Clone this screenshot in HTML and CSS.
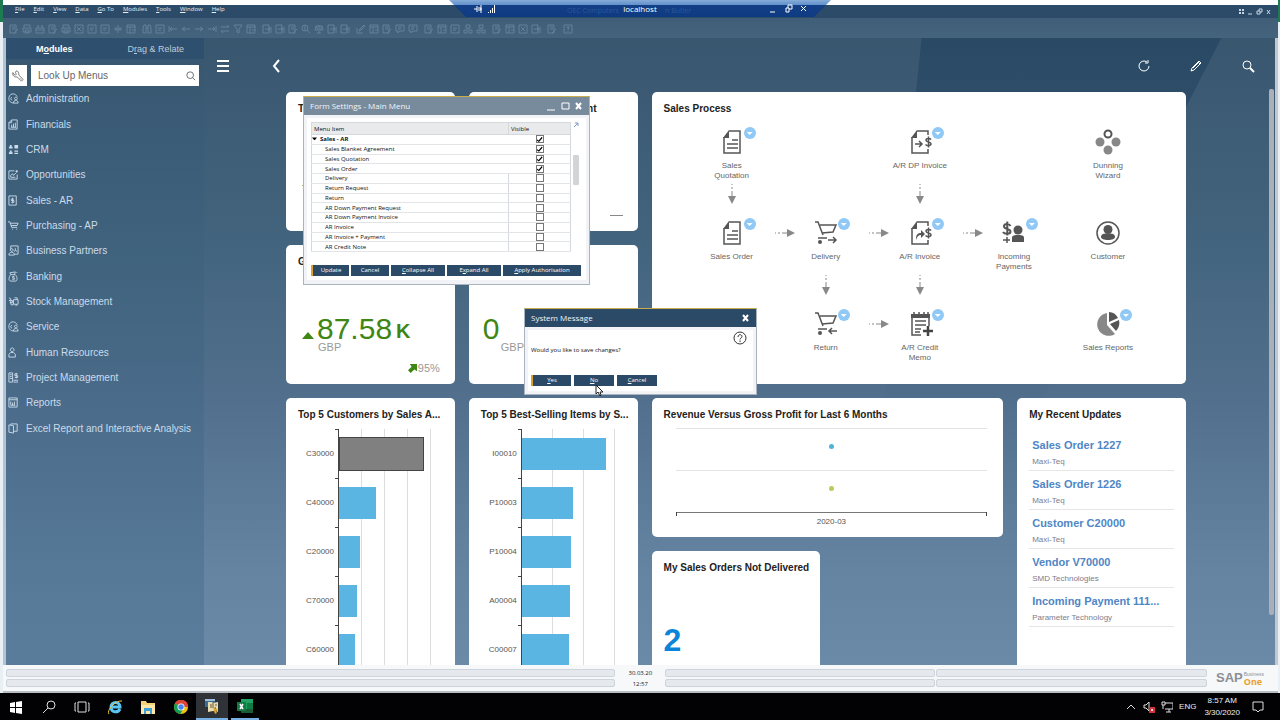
FILE: index.html
```html
<!DOCTYPE html>
<html lang="en">
<head>
  <meta charset="UTF-8">
  <title>localhost - SAP Business One</title>
  <meta name="viewport" content="width=device-width, initial-scale=1">
  <link rel="stylesheet" href="styles.css">
</head>

<body>

  <!-- Icon sprite -->
  <svg class="sprite" aria-hidden="true">
    <symbol id="t-page" viewBox="0 0 10 10"><path d="M1 1h6v8H1zM3 3h3M3 5h3M5 9l4-4"/></symbol>
    <symbol id="t-print" viewBox="0 0 10 10"><path d="M2 4V1h6v3M1 4h8v4H1zM3 6h4v3H3z"/></symbol>
    <symbol id="t-mail" viewBox="0 0 10 10"><path d="M1 4h8v5H1zM1 6h8M3 4V1M7 4V1M3 2h1M7 2h1"/></symbol>
    <symbol id="t-box" viewBox="0 0 10 10"><path d="M1 1h8v8H1zM3 3l4 4M7 3L3 7"/></symbol>
    <symbol id="t-note" viewBox="0 0 10 10"><path d="M1 1h8v8H1zM3 4h4M3 6h3"/></symbol>
    <symbol id="t-move" viewBox="0 0 10 10"><path d="M5 1v8M1 5h8M3 3v4M7 3v4"/></symbol>
    <symbol id="t-grid" viewBox="0 0 10 10"><path d="M1 1h8v8H1zM1 3h8M4 3v6M6 6h3"/></symbol>
    <symbol id="t-find" viewBox="0 0 10 10"><path d="M1 9V4l1-3h2v8zM6 9V1h2l1 3v5zM4 4h2"/></symbol>
    <symbol id="t-first" viewBox="0 0 10 10"><path d="M1 2v6M9 5H2M4 3L2 5l2 2"/></symbol>
    <symbol id="t-prev" viewBox="0 0 10 10"><path d="M9 5H1M4 3L1 5l3 2"/></symbol>
    <symbol id="t-next" viewBox="0 0 10 10"><path d="M1 5h8M6 3l3 2-3 2"/></symbol>
    <symbol id="t-last" viewBox="0 0 10 10"><path d="M9 2v6M1 5h7M6 3l2 2-2 2"/></symbol>
    <symbol id="t-swap" viewBox="0 0 10 10"><path d="M1 3h8L7 1M9 7H1l2 2"/></symbol>
    <symbol id="t-filter" viewBox="0 0 10 10"><path d="M1 1h8L6 5v4L4 8V5z"/></symbol>
    <symbol id="t-doc" viewBox="0 0 10 10"><path d="M1 1h6v8H1zM9 3v6M3 5h5M6 3l2 2-2 2"/></symbol>
    <symbol id="t-scale" viewBox="0 0 10 10"><path d="M5 1v8M2 2h6M1 6l1-4 2 4zM6 6l2-4 1 4zM3 9h4"/></symbol>
    <symbol id="t-zoom" viewBox="0 0 10 10"><circle cx="4" cy="4" r="3"/><path d="M6 6l3 3M4 2v4"/></symbol>
    <symbol id="t-pen" viewBox="0 0 10 10"><path d="M1 4v5h6M3 7l1-2 4-4 1 1-4 4z"/></symbol>
    <symbol id="t-msg" viewBox="0 0 10 10"><path d="M1 1h8v6H5L3 9V7H1zM3 3h4M3 5h3"/></symbol>
    <symbol id="t-org" viewBox="0 0 10 10"><path d="M3 1h4v3H3zM5 4v2M1 6h3v3H1zM6 6h3v3H6z"/></symbol>
    <symbol id="t-help" viewBox="0 0 10 10"><path d="M1 1h8v8H1zM4 4V3h2v1L5 5v1M5 7v1"/></symbol>

    <symbol id="m-admin" viewBox="0 0 12 12"><path d="M6 11c-4-.500-5.500-3-5-6s3-4.500 5-4 3 1 4 3M4 4.500L3 6l1 2M8.500 4.500a1.500 1.500 0 1 0 .1 0zM6 11c0-2 1-3 2.500-3s2.500 1 2.500 3z"/></symbol>
    <symbol id="m-fin" viewBox="0 0 12 12"><path d="M4 1h6v10H1V4zM4 1v3H1M4 9V6M6 9V5M8 9V4M3 9h6"/></symbol>
    <symbol id="m-crm" viewBox="0 0 12 12"><path class="solid" d="M2 1h2v2h1v2H1V3h1zM7 1h4v4H7zM2 7h2v2h1v2H1V9h1zM7 7h4v1.500H7zM7 9.500h4V11H7z"/></symbol>
    <symbol id="m-opp" viewBox="0 0 12 12"><path d="M7 2H1v9h9V6M3 9V7l2-2 1 2 3-3M9.500 1v3M8 2.500h3M3 9h5"/></symbol>
    <symbol id="m-sales" viewBox="0 0 12 12"><path d="M1 1h8v10H1zM6.500 4.500h-3v1.500h3v2h-3M5 3v6"/></symbol>
    <symbol id="m-cart" viewBox="0 0 12 12"><path d="M0 2h2l2 6h6M2.500 3.500H11L10 6H3.500M4.500 10h1M9 10h1"/></symbol>
    <symbol id="m-bp" viewBox="0 0 12 12"><path d="M3 5V1h8v9H7M4 4a1.500 1.500 0 1 0 .1 0zM1 11c0-2 1-3 3-3s3 1 3 3zM8 3.500v2M6.500 7l1.500-1 2 1"/></symbol>
    <symbol id="m-bank" viewBox="0 0 12 12"><path d="M3 4h5c2 2 3 7 0 7H3C0 11 1 6 3 4zM3 4L2 2l6-1-1 3M7 6H5v1.500h2V9H4.500M9 1l1 1"/></symbol>
    <symbol id="m-stock" viewBox="0 0 12 12"><path d="M1 2l2 1v6M3 9h3M6 4h5v5H6zM7 2h3v2M1 5h4v2H2M4 10h1M8 10h2"/></symbol>
    <symbol id="m-hr" viewBox="0 0 12 12"><path d="M4.500 1a2 2 0 1 0 .1 0zM1 11V8l2-2h3l2 2v3z"/></symbol>
    <symbol id="m-proj" viewBox="0 0 12 12"><path d="M1 1h4v10H1zM2 3h2M2 5h2M2 7h3M10.500 2H7.500v2h3v2h-3M9 1v6M6 9h5M6 11h5"/></symbol>
    <symbol id="m-rep" viewBox="0 0 12 12"><path d="M1 1h9v10H1zM1 3h9M3 5v4M5 6v3M7 5v4M3 9h5"/></symbol>
    <symbol id="m-xl" viewBox="0 0 12 12"><path d="M1 2l5 1v8L1 10zM3 2V1h7v8H6"/></symbol>

    <symbol id="p-doc" viewBox="0 0 26 26"><path class="line" d="M10 2h11v22H5V8"/><path class="solid" d="M10 1v8H4z"/><path class="line" d="M13 11h6M8 15h11M8 19h11"/></symbol>
    <symbol id="p-dp" viewBox="0 0 26 26"><path class="line" d="M10 2h11v4M21 20v4H5V8"/><path class="solid" d="M10 1v8H4z"/><path class="line" d="M8 15h6M12 12l3 3-3 3M24 10.500c-1-1.500-5-1.500-5 .8 0 2.300 5 1.200 5 3.500s-4 2.400-5.500.7M21.500 7.500v11"/></symbol>
    <symbol id="p-inv" viewBox="0 0 26 26"><path class="line" d="M10 2h11v4M21 20v4H5V8"/><path class="solid" d="M10 1v8H4zM9 20c0-5 1-7 5-7v-3l4 4-4 4v-3c-3 0-4 2-5 5z"/><path class="line" d="M24 10.500c-1-1.500-5-1.500-5 .8 0 2.300 5 1.200 5 3.500s-4 2.400-5.500.7M21.500 7.500v11"/></symbol>
    <symbol id="p-deliver" viewBox="0 0 26 26"><path class="line" d="M2 2h3l5 13M7 5h16l-3 7-11 1M5 18h9M15 20h8M20 17l3 3-3 3"/><circle class="solid" cx="7" cy="22" r="2"/></symbol>
    <symbol id="p-return" viewBox="0 0 26 26"><path class="line" d="M2 2h3l5 13M7 5h16l-3 7-11 1M5 18h9M16 20h8M19 17l-3 3 3 3"/><circle class="solid" cx="7" cy="22" r="2"/></symbol>
    <symbol id="p-memo" viewBox="0 0 26 26"><path class="line" d="M5 4h17v11M14 24H5V4M8 10h11M8 14h11M8 18h6M8 21h5"/><path class="solid" d="M4 3h19v4H4z"/><path class="line" d="M7 1v3M12 1v3M17 1v3M21 1v3"/><path class="bold" d="M21 15v10M16 20h10"/></symbol>
    <symbol id="p-pay" viewBox="0 0 26 26"><path class="mark" d="M9.500 6C8 3 3 3.500 3 6.500s6.500 2 6.500 5-6 3-7.500.5M6.300 1.500v14"/><path class="line" d="M2 20h7M6 17v6"/><circle class="solid" cx="17" cy="10" r="4.500"/><path class="solid" d="M11 22v-4c0-3 3-3 6-3s6 0 6 3v4z"/></symbol>
    <symbol id="p-dun" viewBox="0 0 26 26"><circle class="mark" cx="13" cy="5" r="3.500"/><circle class="mid" cx="5" cy="13" r="4.500"/><circle class="mid" cx="21" cy="13" r="4.500"/><circle class="mid" cx="13" cy="21" r="4.500"/></symbol>
    <symbol id="p-cust" viewBox="0 0 26 26"><circle class="line" cx="13" cy="13" r="11"/><circle class="solid" cx="13" cy="9.500" r="4.500"/><path class="solid" d="M6 17c0-3 3-3.500 5-3.500h4c2 0 5 .5 5 3.500 0 2-3 3-7 3s-7-1-7-3z"/></symbol>
    <symbol id="p-pie" viewBox="0 0 26 26"><path class="mid" d="M12 2v12l8 9A11.500 11.500 0 1 1 12 2z"/><path class="solid" d="M14 1c4 0 7 2 9 6l-9 4zM24 9c1 4 0 8-3 11l-6-7z"/></symbol>
    <symbol id="a-right" viewBox="0 0 20 8"><path d="M0 4h1M3 4h2M7 4h6" stroke="#888" stroke-width="1" fill="none"/><path d="M12 0l8 4-8 4z" fill="#888"/></symbol>
    <symbol id="a-down" viewBox="0 0 8 20"><path d="M4 0v1M4 3v2M4 7v6" stroke="#888" stroke-width="1" fill="none"/><path d="M0 12l4 8 4-8z" fill="#888"/></symbol>
  </svg>

  <div class="app">
    <!-- Menu bar -->
    <header class="menubar">
      <nav class="menus">
        <a href="#"><u>F</u>ile</a>
        <a href="#"><u>E</u>dit</a>
        <a href="#"><u>V</u>iew</a>
        <a href="#"><u>D</u>ata</a>
        <a href="#"><u>G</u>o To</a>
        <a href="#"><u>M</u>odules</a>
        <a href="#"><u>T</u>ools</a>
        <a href="#"><u>W</u>indow</a>
        <a href="#"><u>H</u>elp</a>
      </nav>
      <svg class="app-controls" viewBox="0 0 32 8" aria-hidden="true"><path class="solid" d="M0 1h2v2H0zM3 1h2v2H3zM0 4h2v2H0zM3 4h2v2H3z"/><path d="M9 6h4M18 3h3v3h-3zM20 3V1h3v3h-2M28 2l3 4M31 2l-3 4"/></svg>
    </header>

    <!-- Toolbar -->
    <div class="toolbar">
      <div class="tools">
        <svg><use href="#t-page"/></svg><svg><use href="#t-print"/></svg><svg><use href="#t-mail"/></svg><svg><use href="#t-page"/></svg><svg><use href="#t-print"/></svg><svg><use href="#t-box"/></svg><svg><use href="#t-note"/></svg><svg><use href="#t-note"/></svg><svg><use href="#t-move"/></svg><svg><use href="#t-grid"/></svg>
      </div>
      <div class="tools">
        <svg><use href="#t-find"/></svg><svg><use href="#t-note"/></svg><svg><use href="#t-first"/></svg><svg><use href="#t-prev"/></svg><svg><use href="#t-next"/></svg><svg><use href="#t-last"/></svg><svg><use href="#t-swap"/></svg><svg><use href="#t-filter"/></svg><svg><use href="#t-grid"/></svg>
      </div>
      <div class="tools">
        <svg><use href="#t-doc"/></svg><svg><use href="#t-doc"/></svg><svg><use href="#t-page"/></svg><svg><use href="#t-zoom"/></svg><svg><use href="#t-scale"/></svg><svg><use href="#t-doc"/></svg><svg><use href="#t-doc"/></svg>
      </div>
      <div class="tools">
        <svg><use href="#t-pen"/></svg><svg><use href="#t-grid"/></svg><svg><use href="#t-page"/></svg><svg><use href="#t-msg"/></svg><svg><use href="#t-msg"/></svg>
      </div>
      <div class="tools">
        <svg><use href="#t-page"/></svg><svg><use href="#t-grid"/></svg><svg><use href="#t-note"/></svg><svg><use href="#t-org"/></svg><svg><use href="#t-org"/></svg>
      </div>
      <div class="tools">
        <svg><use href="#t-page"/></svg><svg><use href="#t-grid"/></svg><svg><use href="#t-box"/></svg><svg><use href="#t-doc"/></svg>
      </div>
      <div class="tools"><svg><use href="#t-page"/></svg></div>
      <div class="tools"><svg><use href="#t-help"/></svg></div>
    </div>

    <div class="workspace">
      <!-- Main menu -->
      <aside class="sidebar">
        <div class="tabs">
          <button class="tab active">M<u>o</u>dules</button>
          <button class="tab">D<u>r</u>ag &amp; Relate</button>
        </div>
        <div class="lookup">
          <button class="wrench" aria-label="Settings"><svg viewBox="0 0 14 14"><path d="M5 1L4 3l1 2-1 1-2-1-1-2c-1 3 2 6 5 5l5 5 2-2-5-5c0-3-1-5-3-5zM10 10l1 1"/></svg></button>
          <div class="search">
            <input type="text" placeholder="Look Up Menus" aria-label="Look Up Menus">
            <svg viewBox="0 0 12 12"><circle cx="5" cy="5" r="4"/><path d="M8 8l3 3"/></svg>
          </div>
        </div>
        <nav class="modules">
          <a href="#"><svg><use href="#m-admin"/></svg>Administration</a>
          <a href="#"><svg><use href="#m-fin"/></svg>Financials</a>
          <a href="#"><svg><use href="#m-crm"/></svg>CRM</a>
          <a href="#"><svg><use href="#m-opp"/></svg>Opportunities</a>
          <a href="#"><svg><use href="#m-sales"/></svg>Sales - AR</a>
          <a href="#"><svg><use href="#m-cart"/></svg>Purchasing - AP</a>
          <a href="#"><svg><use href="#m-bp"/></svg>Business Partners</a>
          <a href="#"><svg><use href="#m-bank"/></svg>Banking</a>
          <a href="#"><svg><use href="#m-stock"/></svg>Stock Management</a>
          <a href="#"><svg><use href="#m-admin"/></svg>Service</a>
          <a href="#"><svg><use href="#m-hr"/></svg>Human Resources</a>
          <a href="#"><svg><use href="#m-proj"/></svg>Project Management</a>
          <a href="#"><svg><use href="#m-rep"/></svg>Reports</a>
          <a href="#"><svg><use href="#m-xl"/></svg>Excel Report and Interactive Analysis</a>
        </nav>
      </aside>

      <!-- Cockpit -->
      <main class="cockpit">
        <div class="cockpit-bar">
          <button aria-label="Menu"><svg viewBox="0 0 14 14"><path d="M1 2h12M1 7h12M1 12h12" stroke-width="2"/></svg></button>
          <button class="back" aria-label="Back"><svg viewBox="0 0 14 14"><path d="M9 1L4 7l5 6" stroke-width="2"/></svg></button>
          <div class="cockpit-actions">
            <button aria-label="Refresh"><svg viewBox="0 0 14 14"><path d="M10 3a5 5 0 1 0 2 4M11 1v3H8"/></svg></button>
            <button aria-label="Edit"><svg viewBox="0 0 14 14"><path d="M2 12l1-3 7-7 2 2-7 7zM9 3l2 2M4 9l5-5"/></svg></button>
            <button aria-label="Search"><svg viewBox="0 0 14 14"><circle cx="6" cy="6" r="4"/><path d="M9 9l4 4" stroke-width="2"/></svg></button>
          </div>
        </div>

        <div class="cards">
          <section class="card">
            <h2>Total</h2>
            <div class="kpi"><i class="up"></i></div>
          </section>

          <section class="card">
            <h2>Customer Sales Amount</h2>
            <div class="kpi"></div>
            <div class="unit"></div>
            <div class="trend"><i class="dash"></i></div>
          </section>

          <section class="card process">
            <h2>Sales Process</h2>
            <div class="flow">
              <div class="node"><svg class="icon"><use href="#p-doc"/></svg><span>Sales<br>Quotation</span><i class="badge"></i><svg class="down"><use href="#a-down"/></svg></div>
              <div></div>
              <div class="node"><svg class="icon"><use href="#p-dp"/></svg><span>A/R DP Invoice</span><i class="badge"></i><svg class="down"><use href="#a-down"/></svg></div>
              <div></div>
              <div class="node"><svg class="icon"><use href="#p-dun"/></svg><span>Dunning<br>Wizard</span></div>

              <div class="node"><svg class="icon"><use href="#p-doc"/></svg><span>Sales Order</span><i class="badge"></i><svg class="right"><use href="#a-right"/></svg></div>
              <div class="node"><svg class="icon"><use href="#p-deliver"/></svg><span>Delivery</span><i class="badge"></i><svg class="right"><use href="#a-right"/></svg><svg class="down"><use href="#a-down"/></svg></div>
              <div class="node"><svg class="icon"><use href="#p-inv"/></svg><span>A/R Invoice</span><i class="badge"></i><svg class="right"><use href="#a-right"/></svg><svg class="down"><use href="#a-down"/></svg></div>
              <div class="node"><svg class="icon"><use href="#p-pay"/></svg><span>Incoming<br>Payments</span><i class="badge"></i></div>
              <div class="node"><svg class="icon"><use href="#p-cust"/></svg><span>Customer</span></div>

              <div></div>
              <div class="node"><svg class="icon"><use href="#p-return"/></svg><span>Return</span><i class="badge"></i><svg class="right"><use href="#a-right"/></svg></div>
              <div class="node"><svg class="icon"><use href="#p-memo"/></svg><span>A/R Credit<br>Memo</span><i class="badge"></i></div>
              <div></div>
              <div class="node"><svg class="icon"><use href="#p-pie"/></svg><span>Sales Reports</span><i class="badge"></i></div>
            </div>
          </section>

          <section class="card">
            <h2>Gross</h2>
            <div class="kpi"><i class="up"></i><span>87.58</span><b>K</b></div>
            <div class="unit">GBP</div>
            <div class="trend"><svg viewBox="0 0 10 10"><path d="M2 0h8v8L7 6l-4 4-3-3 4-4z"/></svg>95%</div>
          </section>

          <section class="card untitled">
            <div class="kpi flat"><span>0</span></div>
            <div class="unit flat">GBP</div>
          </section>

          <section class="card tall">
            <h2>Top 5 Customers by Sales A...</h2>
            <div class="bars customers">
              <div class="bar-row"><span>C30000</span><div class="slot"><div class="bar selected" style="width: 85px"></div></div></div>
              <div class="bar-row"><span>C40000</span><div class="slot"><div class="bar" style="width: 37px"></div></div></div>
              <div class="bar-row"><span>C20000</span><div class="slot"><div class="bar" style="width: 21px"></div></div></div>
              <div class="bar-row"><span>C70000</span><div class="slot"><div class="bar" style="width: 18px"></div></div></div>
              <div class="bar-row"><span>C60000</span><div class="slot"><div class="bar" style="width: 16px"></div></div></div>
            </div>
          </section>

          <section class="card tall">
            <h2>Top 5 Best-Selling Items by S...</h2>
            <div class="bars items">
              <div class="bar-row"><span>I00010</span><div class="slot"><div class="bar" style="width: 84px"></div></div></div>
              <div class="bar-row"><span>P10003</span><div class="slot"><div class="bar" style="width: 51px"></div></div></div>
              <div class="bar-row"><span>P10004</span><div class="slot"><div class="bar" style="width: 49px"></div></div></div>
              <div class="bar-row"><span>A00004</span><div class="slot"><div class="bar" style="width: 48px"></div></div></div>
              <div class="bar-row"><span>C00007</span><div class="slot"><div class="bar" style="width: 47px"></div></div></div>
            </div>
          </section>

          <section class="card wide-card">
            <h2>Revenue Versus Gross Profit for Last 6 Months</h2>
            <div class="points">
              <div class="band"><i class="dot blue"></i></div>
              <div class="band"><i class="dot green"></i></div>
              <div class="axis">2020-03</div>
            </div>
          </section>

          <section class="card tall">
            <h2>My Recent Updates</h2>
            <ul class="updates">
              <li><a href="#">Sales Order 1227</a><span>Maxi-Teq</span></li>
              <li><a href="#">Sales Order 1226</a><span>Maxi-Teq</span></li>
              <li><a href="#">Customer C20000</a><span>Maxi-Teq</span></li>
              <li><a href="#">Vendor V70000</a><span>SMD Technologies</span></li>
              <li><a href="#">Incoming Payment 111...</a><span>Parameter Technology</span></li>
            </ul>
          </section>

          <section class="card">
            <h2>My Sales Orders Not Delivered</h2>
            <div class="count">2</div>
          </section>
        </div>
        <div class="scrollbar"></div>
      </main>
    </div>

    <!-- Status bar -->
    <footer class="statusbar">
      <div class="fields first"><i></i><i></i></div>
      <div class="stamp"><span>30.03.20</span><span>12:57</span></div>
      <div class="fields"><i></i><i></i></div>
      <div class="fields"><i></i><i></i></div>
      <div class="logo"><b>SAP</b><span>Business<em>One</em></span></div>
    </footer>
  </div>

  <!-- Windows taskbar -->
  <div class="taskbar">
    <button class="task" aria-label="Start"><svg viewBox="0 0 16 16"><path fill="#fff" d="M2 4l5-1v5H2zM8 3l6-1v6H8zM2 9h5v5l-5-1zM8 9h6v6l-6-1z"/></svg></button>
    <button class="task" aria-label="Search"><svg viewBox="0 0 16 16"><g fill="none" stroke="#ddd"><circle cx="10" cy="6" r="4"/><path d="M7 9l-5 5"/></g></svg></button>
    <button class="task" aria-label="Task view"><svg viewBox="0 0 16 16"><path fill="none" stroke="#ddd" d="M4 3h8v10H4zM2 4H1v8h1M14 4h1v8h-1"/></svg></button>
    <button class="task" aria-label="Internet Explorer"><svg viewBox="0 0 16 16"><path fill="none" stroke="#5cc4f0" stroke-width="3" d="M4 8h9c0-6-9-6-9 0 0 6 7 6 9 2"/><path fill="none" stroke="#f2c53d" d="M2 15C-1 12 8 1 15 2"/></svg></button>
    <button class="task" aria-label="File Explorer"><svg viewBox="0 0 16 16"><path fill="#f5d277" d="M1 2h5l1 2h8v11H1z"/><path fill="#fbe8a6" d="M1 6h14v9H1z"/><path fill="#3f9fd8" d="M4 9h8v6h-2v-3H6v3H4z"/></svg></button>
    <button class="task" aria-label="Chrome"><svg viewBox="0 0 16 16"><circle cx="8" cy="8" r="7" fill="#f4c20d"/><path fill="#db4437" d="M8 8h7A7 7 0 0 0 2 4.500z"/><path fill="#db4437" d="M2 4.500A7 7 0 0 1 14.500 5H8z"/><path fill="#0f9d58" d="M2 4.500A7 7 0 0 0 7.500 15L10 10 8 8z"/><circle cx="8" cy="8" r="3.500" fill="#fff"/><circle cx="8" cy="8" r="2.700" fill="#4285f4"/></svg></button>
    <button class="task current" aria-label="SAP Business One"><svg viewBox="0 0 16 16"><path fill="#3d6b96" d="M1 1h10v8H1z"/><path fill="#9dbcd8" d="M1 1h10v2H1z"/><path fill="#e8dcb0" d="M4 4h4l1 1 5-1v10l-5-1-5 1z"/><path fill="none" stroke="#6a5a30" d="M6 7h2M6 9h2M9 5v5M11 7h2M11 9l2 5"/><path fill="#d9a52e" d="M9 9l5 3-2 1 1 2-2 1-1-3z"/></svg></button>
    <button class="task open" aria-label="Excel"><svg viewBox="0 0 16 16"><path fill="#21a366" d="M4 1h12v14H4z"/><path fill="#107c41" d="M10 5h6v10h-6z"/><path fill="#185c37" d="M4 11h12v4H4z"/><path fill="#107c41" d="M0 4h9v9H0z"/><path stroke="#fff" stroke-width="1.500" d="M3 6l3 5M6 6l-3 5"/></svg></button>
    <div class="tray">
      <svg viewBox="0 0 12 12"><path d="M2 8l4-4 4 4"/></svg>
      <svg viewBox="0 0 12 12"><path d="M1 4h2l3-3v9L3 7H1z"/><path fill="#d9303e" stroke="none" d="M6 6h6v6H6z"/><path d="M8 8l2 2M10 8l-2 2"/></svg>
      <svg viewBox="0 0 12 12"><path d="M4 2h8v6H4M8 8v3M5 11h5M1 1h3v3H1zM2 4v4"/></svg>
      <span>ENG</span>
      <span class="clock">8:57 AM<br>3/30/2020</span>
      <svg viewBox="0 0 12 12"><path d="M1 1h10v8H8l-2 2-2-2H1z"/></svg>
    </div>
  </div>

  <!-- Remote desktop connection bar -->
  <div class="rdp">
    <svg viewBox="0 0 26 10" aria-hidden="true"><path d="M1 5h3M4 2v6M5 4h3v2H5M8 1v8" stroke="#fff" fill="none"/><path fill="#fff" d="M15 8h1v1h-1zM17 6h1v3h-1zM19 4h1v5h-1zM21 1h1v8h-1z"/></svg>
    <div class="session"><span>OEC Computers</span><span>n Butler</span></div>
    <span class="host">localhost</span>
    <svg class="rdp-controls" viewBox="0 0 38 10" aria-hidden="true"><path d="M1 8h5M17 4h3v4h-3zM19 4V1h4v4h-3M32 2l5 5M37 2l-5 5" stroke="#fff" fill="none"/></svg>
  </div>

  <!-- Form settings window -->
  <div class="window form-settings">
    <div class="title muted">
      <span>Form Settings - Main Menu</span>
      <svg viewBox="0 0 38 10"><path d="M2 9h8M17 2h7v6h-7z" stroke-width="1"/><path d="M31 2l5 6M36 2l-5 6" stroke-width="2"/></svg>
    </div>
    <div class="form-body">
      <div class="grid-wrap">
        <table>
          <thead>
            <tr><th>Menu Item</th><th class="visible">Visible</th></tr>
          </thead>
          <tbody>
            <tr class="group"><td><label for="c1">Sales - AR</label></td><td><input type="checkbox" id="c1" checked></td></tr>
            <tr class="on"><td><label for="c2">Sales Blanket Agreement</label></td><td><input type="checkbox" id="c2" checked></td></tr>
            <tr class="on"><td><label for="c3">Sales Quotation</label></td><td><input type="checkbox" id="c3" checked></td></tr>
            <tr class="on"><td><label for="c4">Sales Order</label></td><td><input type="checkbox" id="c4" checked></td></tr>
            <tr><td><label for="c5">Delivery</label></td><td><input type="checkbox" id="c5"></td></tr>
            <tr><td><label for="c6">Return Request</label></td><td><input type="checkbox" id="c6"></td></tr>
            <tr><td><label for="c7">Return</label></td><td><input type="checkbox" id="c7"></td></tr>
            <tr><td><label for="c8">AR Down Payment Request</label></td><td><input type="checkbox" id="c8"></td></tr>
            <tr><td><label for="c9">AR Down Payment Invoice</label></td><td><input type="checkbox" id="c9"></td></tr>
            <tr><td><label for="c10">AR Invoice</label></td><td><input type="checkbox" id="c10"></td></tr>
            <tr><td><label for="c11">AR Invoice + Payment</label></td><td><input type="checkbox" id="c11"></td></tr>
            <tr><td><label for="c12">AR Credit Note</label></td><td><input type="checkbox" id="c12"></td></tr>
          </tbody>
        </table>
        <div class="grid-side">
          <svg viewBox="0 0 6 6"><path d="M1 5l4-4M2 1h3v3"/></svg>
          <i></i>
        </div>
      </div>
      <div class="buttons">
        <button class="default">Update</button>
        <button>Cancel</button>
        <button class="medium"><u>C</u>ollapse All</button>
        <button class="medium">E<u>x</u>pand All</button>
        <button class="large"><u>A</u>pply Authorisation</button>
      </div>
    </div>
  </div>

  <!-- System message -->
  <div class="window message" role="dialog" aria-label="System Message">
    <div class="title">
      <span>System Message</span>
      <svg viewBox="0 0 38 10"><path d="M31 2l5 6M36 2l-5 6" stroke-width="2"/></svg>
    </div>
    <div class="message-body">
      <svg class="question" viewBox="0 0 14 14"><circle cx="7" cy="7" r="6"/><path d="M5 6c0-3 4-3 4-.5C9 7 7 7 7 8.500M7 9.500V11"/></svg>
      <p>Would you like to save changes?</p>
      <div class="buttons">
        <button class="default"><u>Y</u>es</button>
        <button><u>N</u>o</button>
        <button><u>C</u>ancel</button>
      </div>
    </div>
  </div>

  <svg class="cursor" viewBox="0 0 9 13" aria-hidden="true"><path d="M1 1v9l2-2 2 4 1-1-1-3h3z" fill="#fff" stroke="#222"/></svg>

</body>
</html>
```
FILE: styles.css
```css
* {
  box-sizing: border-box;
}

body {
  margin: 0;
  height: 100vh;
  display: flex;
  flex-direction: column;
  overflow: hidden;
  font-family: "Liberation Sans", Arial, sans-serif;
  background: linear-gradient(#1e7a50 22px, #e8eff5 22px);
}

button {
  border: 0;
  padding: 0;
  background: none;
  font: inherit;
  color: inherit;
}

a {
  color: inherit;
  text-decoration: none;
}

svg {
  display: block;
  flex: none;
}

.sprite {
  position: absolute;
  width: 0;
  height: 0;
}

.app {
  flex: 1;
  min-height: 0;
  margin: 0 2px 0 3px;
  border-top: 5px solid #fff;
  display: flex;
  flex-direction: column;
}

/* Menu bar */
.menubar {
  height: 13px;
  padding: 0 7px 0 12px;
  display: flex;
  justify-content: space-between;
  align-items: center;
  background: #2c4b68;
  color: #e6edf4;
}

.menus {
  display: flex;
  gap: 9px;
  font: 6px/9px "Open Sans", sans-serif;
  padding-bottom: 4px;
}

.app-controls {
  width: 32px;
  height: 8px;
  fill: none;
  stroke: #c9d6e2;
}

.app-controls .solid {
  fill: #c9d6e2;
  stroke: none;
}

/* Toolbar */
.toolbar {
  height: 20px;
  padding: 2px 6px 0;
  display: flex;
  align-items: center;
  gap: 6px;
  background: linear-gradient(#405e77, #44637c);
}

.tools {
  display: flex;
  gap: 3px;
}

.tools svg {
  width: 10px;
  height: 10px;
  fill: none;
  stroke: #64819a;
}

/* Workspace */
.workspace {
  flex: 1;
  min-height: 0;
  display: flex;
  border-left: 3px solid #b3c3d4;
  border-right: 3px solid #c3c8cf;
  background: linear-gradient(#39566f, #44657f 35%, #52708d 58%, #6484a1 85%, #6b8aa8);
}

.sidebar {
  width: 198px;
  background: linear-gradient(rgba(40, 85, 120, 0.1), rgba(40, 85, 120, 0.25));
}

.tabs {
  height: 21px;
  display: flex;
  background: #2e4f6e;
}

.tab {
  flex: 1;
  font-size: 9px;
  color: #bccbda;
}

.tab.active {
  padding-right: 5px;
  font-weight: bold;
  color: #fff;
}

.lookup {
  display: flex;
  gap: 4px;
  padding: 6px 5px 0 3px;
}

.wrench {
  width: 18px;
  height: 21px;
  display: grid;
  place-items: center;
  background: #fff;
}

.wrench svg {
  width: 12px;
  height: 12px;
  fill: none;
  stroke: #666;
}

.search {
  flex: 1;
  display: flex;
  align-items: center;
  padding-right: 3px;
  background: #fff;
}

.search input {
  flex: 1;
  min-width: 0;
  border: 0;
  padding: 0 0 0 7px;
  background: none;
  font: 10px/12px "Liberation Sans", Arial, sans-serif;
}

.search input::placeholder {
  color: #666;
}

.search svg {
  width: 10px;
  height: 12px;
  fill: none;
  stroke: #555;
}

.modules {
  display: grid;
  grid-auto-rows: 1fr;
  height: 355px;
}

.modules a {
  display: flex;
  align-items: center;
  gap: 7px;
  padding-left: 2px;
  font-size: 10px;
  white-space: nowrap;
  color: #cbdbea;
}

.modules svg {
  width: 11px;
  height: 11px;
  fill: none;
  stroke: #cbdbea;
}

#m-crm .solid {
  fill: #cbdbea;
  stroke: none;
}

/* Cockpit */
.cockpit {
  flex: 1;
  min-width: 0;
  position: relative;
  z-index: 0;
  overflow: hidden;
}

/* darker facet behind the cards */
.cockpit::before {
  content: "";
  position: absolute;
  inset: 0;
  z-index: -1;
  background: linear-gradient(rgba(25, 60, 90, 0.5), rgba(25, 60, 90, 0) 60%);
  clip-path: polygon(67% 0, 95% 0, 80% 50%, 70% 100%, 61% 100%);
}

.cockpit-bar {
  display: flex;
  align-items: center;
  height: 54px;
  padding: 2px 20px 0 12px;
}

.cockpit-bar svg {
  width: 14px;
  height: 14px;
  fill: none;
  stroke: #fff;
}

.cockpit-bar .back {
  margin-left: 40px;
}

.cockpit-actions {
  margin-left: auto;
  display: flex;
  gap: 38px;
}

.cards {
  display: grid;
  grid-template-columns: repeat(5, 1fr);
  grid-auto-rows: 139px;
  gap: 14px;
  padding: 0 89px 0 82px;
}

.card {
  min-width: 0;
  background: #fff;
  border-radius: 5px;
  padding: 11px 12px 0;
}

.card h2 {
  margin: 0;
  font-size: 10px;
  line-height: 12px;
  white-space: nowrap;
  color: #222;
}

.untitled {
  padding-top: 23px;
}

.process {
  grid-column: span 3;
  grid-row: span 2;
}

.tall {
  grid-row: span 2;
}

.wide-card {
  grid-column: span 2;
}

.kpi {
  display: flex;
  align-items: flex-end;
  min-height: 30px;
  margin-top: 46px;
  padding-left: 4px;
  font-size: 30px;
  line-height: 30px;
  color: #3f8614;
}

.kpi.flat {
  padding-left: 2px;
}

.kpi b {
  margin-left: 4px;
  font-size: 20px;
  line-height: 26px;
}

.up {
  width: 12px;
  height: 7px;
  margin: 0 3px 5px 0;
  background: #3f8614;
  clip-path: polygon(50% 0, 100% 100%, 0 100%);
}

.unit {
  min-height: 12px;
  margin-top: -3px;
  padding-left: 20px;
  font-size: 11px;
  line-height: 12px;
  color: #999;
}

.trend {
  display: flex;
  justify-content: flex-end;
  align-items: center;
  gap: 1px;
  margin-top: 9px;
  padding-right: 3px;
  height: 12px;
  font-size: 11px;
  color: #999;
}

.trend svg {
  width: 9px;
  height: 9px;
  fill: #3f8614;
}

.dash {
  width: 13px;
  height: 1px;
  background: #888;
}

/* Sales process */
.flow {
  display: grid;
  grid-template-columns: repeat(5, 1fr);
  grid-auto-rows: 91px;
  margin: 14px 19px 0 21px;
}

.node {
  position: relative;
  display: flex;
  flex-direction: column;
  align-items: center;
  gap: 6px;
  font-size: 8px;
  line-height: 10px;
  text-align: center;
  color: #666;
}

.icon {
  width: 26px;
  height: 26px;
}

.line,
.mark,
.bold {
  fill: none;
  stroke: #555;
  stroke-width: 1.5;
}

.mark {
  stroke-width: 2;
}

.bold {
  stroke: #444;
  stroke-width: 2.5;
}

.solid {
  fill: #555;
}

.mid {
  fill: #888;
}

.badge {
  position: absolute;
  top: -2px;
  left: calc(50% + 12px);
  width: 12px;
  height: 12px;
  border-radius: 50%;
  background: #90c8f6;
}

.badge::before {
  content: "";
  position: absolute;
  top: 5px;
  left: 3px;
  width: 6px;
  height: 3px;
  background: #fff;
  clip-path: polygon(0 0, 100% 0, 50% 100%);
}

.right {
  position: absolute;
  top: 9px;
  right: -16px;
  width: 20px;
  height: 8px;
}

.down {
  position: absolute;
  top: 55px;
  left: calc(50% - 4px);
  width: 8px;
  height: 20px;
}

/* Bar charts */
.bars {
  margin-top: 8px;
}

.bar-row {
  display: flex;
  height: 49px;
  align-items: center;
  font-size: 8px;
  color: #555;
}

.bar-row span {
  width: 38px;
  padding-right: 2px;
  text-align: right;
}

.bar-row .slot {
  position: relative;
  flex: 1;
  height: 49px;
  margin-left: 2px;
  display: flex;
  align-items: center;
  border-left: 1px solid #444;
}

.bar-row .slot::before {
  content: "";
  position: absolute;
  top: 0;
  left: -4px;
  width: 4px;
  height: 1px;
  background: #444;
}

.customers .slot {
  background: repeating-linear-gradient(90deg, transparent 0 22px, #ddd 22px 23px) 0 0 / 92px 100% no-repeat;
}

.items .slot {
  background: repeating-linear-gradient(90deg, transparent 0 30px, #ddd 30px 31px) 0 0 / 93px 100% no-repeat;
}

.bar {
  height: 32px;
  background: #5bb5e3;
}

.bar.selected {
  height: 34px;
  background: #808080;
  border: 1px solid #444;
}

/* Revenue chart */
.points {
  margin: 7px 4px 0 12px;
}

.band {
  height: 42px;
  padding-top: 15px;
  border-top: 1px solid #e3e3e3;
}

.dot {
  display: block;
  width: 5px;
  height: 5px;
  margin: 0 auto;
  border-radius: 50%;
}

.dot.blue {
  background: #4fb2d6;
}

.dot.green {
  background: #b2cf59;
}

.axis {
  padding-top: 5px;
  text-align: center;
  font-size: 8px;
  line-height: 9px;
  color: #555;
  background:
    linear-gradient(#444, #444) 0 0 / 1px 4px no-repeat,
    linear-gradient(#444, #444) 100% 0 / 1px 4px no-repeat,
    linear-gradient(#777, #777) 0 0 / 100% 1px no-repeat;
}

/* Recent updates */
.updates {
  list-style: none;
  margin: 11px 0 0;
  padding: 0;
}

.updates li {
  height: 39px;
  padding: 7px 3px 0;
  border-bottom: 1px solid #e6e6e6;
}

.updates a {
  display: block;
  font-size: 11px;
  font-weight: bold;
  line-height: 12px;
  white-space: nowrap;
  color: #4f86c6;
}

.updates span {
  display: block;
  margin-top: 6px;
  font-size: 8px;
  line-height: 10px;
  color: #7d7d8c;
}

.count {
  margin-top: 48px;
  font-size: 32px;
  line-height: 36px;
  font-weight: bold;
  color: #0c84d8;
}

.scrollbar {
  position: absolute;
  top: 51px;
  right: 1px;
  bottom: 50px;
  width: 5px;
  border-radius: 2px;
  background: #a9b0ba;
}

/* Status bar */
.statusbar {
  height: 28px;
  display: flex;
  padding: 4px 6px 4px 3px;
  border-bottom: 2px solid #b9bec4;
  background: #f6f8fa;
}

.fields {
  flex: 4;
  display: flex;
  flex-direction: column;
  gap: 2px;
  margin-right: 1px;
}

.fields.first {
  flex: 9;
}

.fields i {
  flex: 1;
  border: 1px solid #ced4db;
  border-radius: 2px;
  background: #e5e8ed;
}

.stamp {
  width: 49px;
  display: flex;
  flex-direction: column;
  gap: 2px;
  text-align: center;
  font: 6px/9px "Open Sans", sans-serif;
  color: #222;
}

.logo {
  width: 64px;
  display: flex;
  align-items: center;
  justify-content: center;
  gap: 1px;
  color: #8b8f94;
}

.logo b {
  font: bold 13px/16px "Liberation Sans", Arial, sans-serif;
}

.logo span {
  font-size: 5px;
  line-height: 6px;
}

.logo em {
  display: block;
  font: bold 9px/9px "Open Sans", sans-serif;
  color: #eba22c;
}

/* Taskbar */
.taskbar {
  height: 27px;
  display: flex;
  background: #020204;
  color: #eee;
}

.task {
  width: 32px;
  margin-right: 1px;
  display: grid;
  place-items: center;
}

.task svg {
  width: 16px;
  height: 16px;
}

.task.current {
  margin-right: 3px;
  margin-left: -2px;
  background: #2f3237;
  border-bottom: 2px solid #76b0e4;
}

.task.open {
  width: 28px;
  border-bottom: 2px solid #76b0e4;
}

.tray {
  margin-left: auto;
  padding-right: 16px;
  display: flex;
  align-items: center;
  gap: 6px;
  font: 8px/12px "Liberation Sans", Arial, sans-serif;
}

.tray svg {
  width: 12px;
  height: 12px;
  fill: none;
  stroke: #ddd;
}

.clock {
  text-align: center;
  padding: 0 6px 0 2px;
}

/* Connection bar */
.rdp {
  position: absolute;
  top: 0;
  left: 449px;
  right: 449px;
  height: 17px;
  padding: 0 24px;
  display: flex;
  align-items: center;
  justify-content: space-between;
  background: linear-gradient(#87acd8, #5f8fcb 30%, #123f86 32%, #0f3b82);
  clip-path: polygon(0 0, 100% 0, calc(100% - 17px) 100%, 17px 100%);
  color: #fff;
}

.rdp svg {
  width: 26px;
  height: 10px;
}

.rdp .rdp-controls {
  width: 38px;
}

.host {
  position: absolute;
  left: 50%;
  transform: translateX(-50%);
  top: 3px;
  font: 8px/12px "Open Sans", sans-serif;
}

.session {
  position: absolute;
  left: 118px;
  right: 140px;
  top: 5px;
  display: flex;
  justify-content: space-between;
  font: 7px/12px "Open Sans", sans-serif;
  white-space: nowrap;
  color: #2c5898;
}

/* Windows */
.window {
  position: absolute;
  border: 1px solid #aab4bf;
  border-top-color: #c9ac4c;
  background: #f1f3f6;
}

.form-settings {
  top: 96px;
  left: 303px;
  width: 287px;
}

.message {
  top: 308px;
  left: 524px;
  width: 233px;
}

.title {
  height: 18px;
  display: flex;
  align-items: center;
  justify-content: space-between;
  padding: 0 6px;
  font: 8px/12px "Open Sans", sans-serif;
  background: #2b4a68;
  color: #f2f5f8;
}

.title.muted {
  background: #788b9d;
}

.title svg {
  width: 38px;
  height: 10px;
  fill: none;
  stroke: #fff;
}

.form-body {
  margin: 3px 3px 4px;
  padding: 4px;
  background: #fff;
}

.grid-wrap {
  display: flex;
}

.form-settings table {
  width: 260px;
  height: 130px;
  border-collapse: collapse;
  table-layout: fixed;
  border: 1px solid #d5d8dc;
  font: 6px/8px "Open Sans", sans-serif;
  color: #111;
}

.form-settings th {
  height: 12px;
  padding: 0 2px;
  font-weight: normal;
  text-align: left;
  background: #e9eaec;
}

.form-settings th.visible {
  width: 62px;
  border-left: 1px solid #d5d8dc;
}

.form-settings td {
  padding: 0 0 0 13px;
  border: 1px solid #d5d8dc;
  border-bottom-color: #e2e4e8;
}

.form-settings td + td {
  padding: 0 0 0 27px;
}

.form-settings .on td,
.form-settings .group td {
  border-left: 0;
  border-right: 0;
}

.form-settings .group td:first-child {
  padding-left: 0;
  font-weight: bold;
}

.group label::before {
  content: "";
  display: inline-block;
  width: 5px;
  height: 3px;
  margin: 0 3px 1px 0;
  background: #000;
  clip-path: polygon(0 0, 100% 0, 50% 100%);
}

.form-settings input {
  appearance: none;
  display: block;
  width: 8px;
  height: 8px;
  margin: 0;
  border: 1px solid #777;
  background: #fff;
}

.form-settings input:checked::before {
  content: "";
  display: block;
  width: 6px;
  height: 6px;
  background: #000;
  clip-path: polygon(0 45%, 35% 70%, 90% 5%, 100% 25%, 40% 95%, 0 65%);
}

.grid-side {
  width: 9px;
  display: flex;
  flex-direction: column;
  align-items: center;
  gap: 27px;
}

.grid-side svg {
  width: 6px;
  height: 6px;
  fill: none;
  stroke: #7d9cc0;
}

.grid-side i {
  width: 6px;
  height: 30px;
  border-radius: 1px;
  background: #d3d4d6;
}

.buttons {
  display: flex;
  gap: 2px;
}

.form-body .buttons {
  margin-top: 13px;
}

.buttons button {
  width: 38px;
  height: 11px;
  font: 6px/9px "Open Sans", sans-serif;
  white-space: nowrap;
  background: #2b4a68;
  color: #fff;
}

.buttons .default {
  border-left: 2px solid #e0a22e;
}

.buttons .medium {
  width: 54px;
}

.buttons .large {
  width: 78px;
}

.message-body {
  margin: 3px;
  padding: 1px 6px 5px 3px;
  background: #fff;
}

.question {
  width: 14px;
  height: 14px;
  margin-left: auto;
  fill: none;
  stroke: #333;
}

.message p {
  margin: 1px 0 0;
  font: 6px/8px "Open Sans", sans-serif;
  color: #111;
}

.message .buttons {
  gap: 3px;
  margin-top: 21px;
}

.message .buttons button {
  width: 40px;
}

.cursor {
  position: absolute;
  top: 384px;
  left: 595px;
  width: 9px;
  height: 13px;
}
```
